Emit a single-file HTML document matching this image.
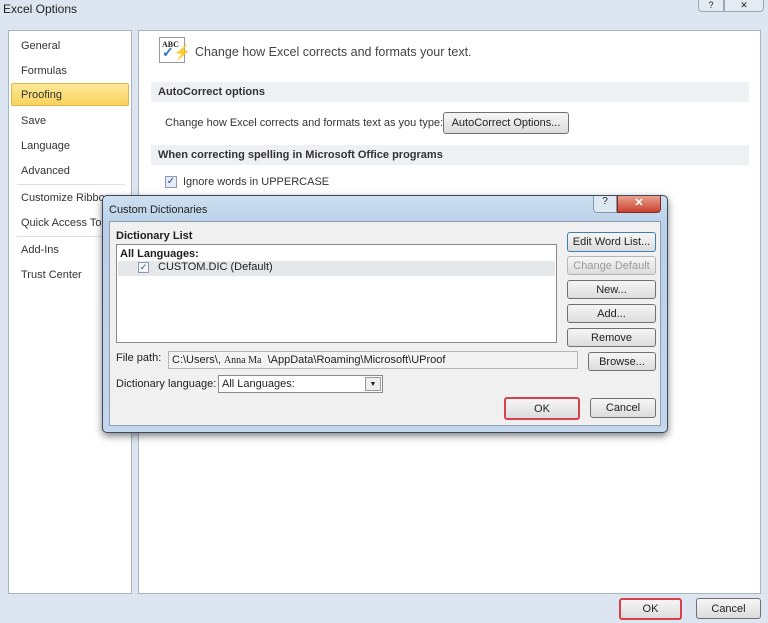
<!DOCTYPE html>
<html><head><style>
*{box-sizing:border-box;margin:0;padding:0}
body{width:768px;height:623px;background:#dde6f0;font-family:"Liberation Sans",sans-serif;font-size:11px;color:#1e1e1e;position:relative;overflow:hidden}
.abs{position:absolute}
.nav{left:8px;top:30px;width:124px;height:564px;background:#fff;border:1px solid #a9b4c2}
.nav div{position:absolute;left:12px;font-size:11px;color:#333}
.main{left:138px;top:30px;width:623px;height:564px;background:#fff;border:1px solid #a9b4c2}
.sec{position:absolute;left:12px;width:598px;height:20px;background:#eef0f3;font-weight:bold;padding:4px 7px;font-size:11px;color:#333}
.btn{position:absolute;border:1px solid #707070;border-radius:3px;background:linear-gradient(#f6f6f6,#dcdcdc);display:flex;align-items:center;justify-content:center;font-size:11px;color:#222}
</style></head><body>
<div class="abs" style="left:3px;top:2px;font-size:12px">Excel Options</div>
<div class="abs" style="left:698px;top:0;width:26px;height:12px;border:1px solid #9aa7b6;border-top:none;border-radius:0 0 0 4px;background:#e4ebf3;font-size:9px;text-align:center">?</div>
<div class="abs" style="left:724px;top:0;width:40px;height:12px;border:1px solid #9aa7b6;border-top:none;border-radius:0 0 4px 0;background:#e4ebf3;font-size:9px;text-align:center">✕</div>
<div class="abs nav">
<div style="top:9px">General</div>
<div style="top:34px">Formulas</div>
<div class="abs" style="left:2px;top:52px;width:118px;height:23px;background:linear-gradient(#fde89a,#f8d25c);border:1px solid #e0b84a;border-radius:2px"></div>
<div style="top:58px">Proofing</div>
<div style="top:84px">Save</div>
<div style="top:109px">Language</div>
<div style="top:134px">Advanced</div>
<div style="top:153px;left:8px;width:108px;height:1px;background:#dde"></div>
<div style="top:161px">Customize Ribbon</div>
<div style="top:186px">Quick Access Toolbar</div>
<div style="top:205px;left:8px;width:108px;height:1px;background:#dde"></div>
<div style="top:213px">Add-Ins</div>
<div style="top:238px">Trust Center</div>
</div>
<div class="abs main" style="overflow:hidden">
<div class="abs" style="left:20px;top:6px;width:26px;height:26px;border:1px solid #99a;background:#fff;font-size:8px;font-family:'Liberation Serif';font-weight:bold;padding:2px">ABC<div style="color:#2a6fd6;font-size:14px;line-height:10px">✓<span style="color:#f0b400">⚡</span></div></div>
<div class="abs" style="left:56px;top:14px;font-size:12.5px;color:#444">Change how Excel corrects and formats your text.</div>
<div class="sec" style="top:51px">AutoCorrect options</div>
<div class="abs" style="left:26px;top:86px;color:#333">Change how Excel corrects and formats text as you type:</div>
<div class="btn" style="left:304px;top:81px;width:126px;height:22px">AutoCorrect Options...</div>
<div class="sec" style="top:114px">When correcting spelling in Microsoft Office programs</div>
<div class="abs" style="left:26px;top:145px;width:12px;height:12px;border:1px solid #8a9ab0;background:#e4ecf7;font-size:10px;line-height:10px;color:#2a4a8a;text-align:center">✓</div>
<div class="abs" style="left:44px;top:145px;color:#333">Ignore words in UPPERCASE</div>
</div>
<div class="btn" style="left:619px;top:598px;width:63px;height:22px;border:2px solid #d9414a">OK</div>
<div class="btn" style="left:696px;top:598px;width:65px;height:21px">Cancel</div>

<div class="abs" style="left:102px;top:195px;width:566px;height:238px;border:1px solid #3c4a5c;border-radius:5px;background:linear-gradient(#cddff0,#b9d0e8 30px,#c4d7ec);box-shadow:0 3px 8px rgba(0,0,0,.5)">
<div class="abs" style="left:6px;top:8px;font-size:11px">Custom Dictionaries</div>
<div class="abs" style="left:490px;top:0;width:24px;height:17px;border:1px solid #8898ac;border-top:none;border-radius:0 0 0 4px;background:#dde8f3;font-size:10px;text-align:center">?</div>
<div class="abs" style="left:514px;top:0;width:44px;height:17px;border:1px solid #7a2a2a;border-top:none;border-radius:0 0 4px 0;background:linear-gradient(#e9a08e,#c8422d);color:#fff;font-weight:bold;text-align:center;font-size:11px">✕</div>
<div class="abs" style="left:6px;top:25px;width:552px;height:205px;background:#f0f0f0;border:1px solid #8e9db0">
<div class="abs" style="left:6px;top:8px;font-weight:bold;font-size:11px">Dictionary List</div>
<div class="abs" style="left:6px;top:22px;width:441px;height:99px;background:#fff;border:1px solid #8a8a8a">
<div class="abs" style="left:3px;top:3px;font-weight:bold">All Languages:</div>
<div class="abs" style="left:1px;top:16px;width:437px;height:15px;background:#e5e7ea"></div>
<div class="abs" style="left:21px;top:17px;width:11px;height:11px;border:1px solid #8a9ab0;background:#f4f6fa;font-size:9px;line-height:9px;text-align:center;color:#2a4a8a">✓</div>
<div class="abs" style="left:41px;top:16px">CUSTOM.DIC (Default)</div>
</div>
<div class="btn" style="left:457px;top:10px;width:89px;height:20px;border-color:#3c7fb1">Edit Word List...</div>
<div class="btn" style="left:457px;top:34px;width:89px;height:19px;color:#999;border-color:#b5b5b5">Change Default</div>
<div class="btn" style="left:457px;top:58px;width:89px;height:19px">New...</div>
<div class="btn" style="left:457px;top:82px;width:89px;height:19px">Add...</div>
<div class="btn" style="left:457px;top:106px;width:89px;height:19px">Remove</div>
<div class="abs" style="left:6px;top:130px">File path:</div>
<div class="abs" style="left:58px;top:129px;width:410px;height:18px;border:1px solid #b5b5b5;background:#f3f3f3;padding:2px 3px">C:\Users\, <span style="font-family:'Liberation Serif';font-size:10px">Anna Ma</span> &nbsp;\AppData\Roaming\Microsoft\UProof</div>
<div class="btn" style="left:478px;top:130px;width:68px;height:19px">Browse...</div>
<div class="abs" style="left:6px;top:156px">Dictionary language:</div>
<div class="abs" style="left:108px;top:153px;width:165px;height:18px;border:1px solid #8a8a8a;background:#fff;padding:2px 3px">All Languages:</div>
<div class="abs" style="left:255px;top:155px;width:16px;height:14px;border:1px solid #999;background:#eee;font-size:7px;text-align:center;line-height:13px">▼</div>
<div class="btn" style="left:394px;top:175px;width:76px;height:23px;border:2px solid #d9414a">OK</div>
<div class="btn" style="left:480px;top:176px;width:66px;height:20px">Cancel</div>
</div>
</div>
</body></html>
